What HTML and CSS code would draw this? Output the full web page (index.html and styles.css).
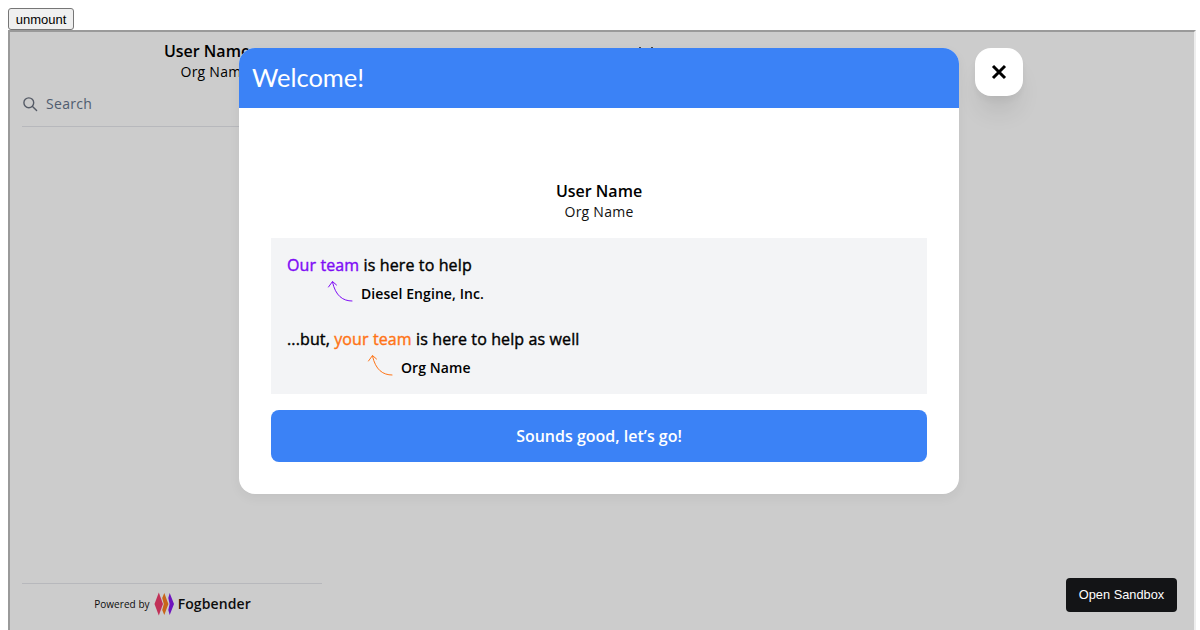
FILE: index.html
```html
<!DOCTYPE html>
<html lang="en">
<head>
<meta charset="utf-8">
<title>Welcome</title>
<link rel="stylesheet" href="styles.css">
</head>
<body>
<button class="unmount" type="button">unmount</button>
<div class="frame">
  <aside class="sidebar">
    <div class="me">
      <div class="me-name">User Name</div>
      <div class="me-org">Org Name</div>
    </div>
    <div class="search">
      <svg class="search-icon" viewBox="0 0 16 16" width="16" height="16" fill="none" stroke="#6b7280" stroke-width="1.4" stroke-linecap="round"><circle cx="6.8" cy="6.8" r="4.9"/><path d="M10.5 10.5 14.6 14.6"/></svg>
      <span class="search-text">Search</span>
    </div>
    <div class="spacer"></div>
    <div class="powered">
      <span class="powered-by">Powered by</span>
      <svg class="logo" viewBox="0 0 20 24" width="20" height="24"><path d="M4.800 0.500 9 12 4.800 23.500 0.500 12Z" fill="#f23d6d"/><path d="M10.300 1 14.400 12 10.300 23 8.200 18 9.800 12 8.200 6Z" fill="#fb8020"/><path d="M15.700 1 20 12 15.700 23 14.300 18 15.600 12 14.300 6Z" fill="#8a18ee"/></svg>
      <span class="brand">Fogbender</span>
    </div>
  </aside>
  <div class="ghost"><i></i><i></i></div>
  <div class="overlay"></div>
  <a class="sandbox">Open Sandbox</a>
  <div class="modal-wrap">
    <section class="modal">
      <header class="modal-head">Welcome!</header>
      <div class="modal-body">
        <div class="modal-user">
          <div class="modal-name">User Name</div>
          <div class="modal-org">Org Name</div>
        </div>
        <div class="info">
          <div class="line">
            <div class="headline"><span class="purple">Our team</span> is here to help</div>
            <div class="team team-a">
              <svg width="26" height="22" viewBox="0 0 26 22" fill="none" stroke="#7e0cf5" stroke-width="1" stroke-linecap="round" stroke-linejoin="round"><path d="M25 21C16 21 8.500 16 5.500 2"/><path d="M1.500 7 5.500 1.500 9.500 5"/></svg>
              <span>Diesel Engine, Inc.</span>
            </div>
          </div>
          <div class="line">
            <div class="headline">...but, <span class="orange">your team</span> is here to help as well</div>
            <div class="team team-b">
              <svg width="26" height="22" viewBox="0 0 26 22" fill="none" stroke="#ff7315" stroke-width="1" stroke-linecap="round" stroke-linejoin="round"><path d="M25 21C16 21 8.500 16 5.500 2"/><path d="M1.500 7 5.500 1.500 9.500 5"/></svg>
              <span>Org Name</span>
            </div>
          </div>
        </div>
        <button class="go" type="button">Sounds good, let’s go!</button>
      </div>
    </section>
    <button class="close" type="button" aria-label="Close">
      <svg viewBox="0 0 16 16" width="16" height="16" fill="none" stroke="#000" stroke-width="3"><path d="M2 2 14 14M14 2 2 14"/></svg>
    </button>
  </div>
</div>
</body>
</html>
```

FILE: styles.css
```css
* { box-sizing: border-box; }
html, body { height: 100%; }
body {
  margin: 0;
  padding: 8px 0 0 8px;
  overflow: hidden;
  background: #fff;
  font-family: "Open Sans", sans-serif;
  color: #000;
}
.unmount {
  display: block;
  width: 66px;
  height: 22px;
  padding: 0;
  border: 1px solid #767676;
  border-radius: 3px;
  background: #efefef;
  font: 13px "Liberation Sans", sans-serif;
  color: #000;
}
.frame {
  position: relative;
  width: 1188px;
  height: 604px;
  border: 2px solid;
  border-color: #9a9a9a #eeeeee #eeeeee #9a9a9a;
  background: #fff;
  overflow: hidden;
}
.sidebar {
  display: flex;
  flex-direction: column;
  width: 324px;
  height: 100%;
  padding: 0 0 0 12px;
}
.me { width: 370px; height: 51px; padding-top: 8px; text-align: center; }
.me-name { font-size: 16px; font-weight: 600; line-height: 22px; color: #000; }
.me-org { padding-left: 16px; font-size: 14px; line-height: 20px; color: #000; letter-spacing: 0.25px; }
.search {
  display: flex;
  align-items: center;
  gap: 8px;
  width: 300px;
  height: 44px;
  padding-bottom: 2px;
  border-bottom: 1px solid #e5e7eb;
}
.search-icon { flex: none; }
.search-text { font-size: 14px; color: #64748b; letter-spacing: 0.3px; }
.spacer { flex: 1; }
.powered {
  display: flex;
  align-items: center;
  justify-content: center;
  gap: 4px;
  width: 300px;
  height: 49px;
  padding-bottom: 9px;
  padding-left: 1px;
  border-top: 1px solid #e5e7eb;
}
.powered-by { font-size: 10px; color: #111; letter-spacing: 0.05px; }
.brand { font-size: 14px; font-weight: 600; color: #111; letter-spacing: 0.1px; }
.ghost {
  position: absolute;
  left: 629px;
  top: 15px;
  display: flex;
  gap: 10px;
}
.ghost i { display: block; width: 2px; height: 1px; background: #555; }
.overlay { position: absolute; inset: 0; background: rgba(0, 0, 0, 0.2); }
.sandbox {
  position: absolute;
  right: 17px;
  bottom: 20px;
  display: flex;
  align-items: center;
  justify-content: center;
  width: 111px;
  height: 34px;
  padding-bottom: 1px;
  border-radius: 4px;
  background: #131416;
  color: #fff;
  font: 12.800px "Liberation Sans", sans-serif;
}
.modal-wrap {
  position: absolute;
  left: 229px;
  top: 16px;
  display: flex;
  align-items: flex-start;
  gap: 16px;
}
.modal {
  width: 720px;
  height: 446px;
  border-radius: 16px;
  background: #fff;
  overflow: hidden;
  box-shadow: 0 4px 12px rgba(0, 0, 0, 0.05);
}
.modal-head {
  height: 60px;
  padding: 0 13px;
  background: #3b82f6;
  color: #fff;
  font: 25.500px/59px Lato, sans-serif;
}
.modal-body { padding: 72px 32px 32px; }
.modal-user { text-align: center; height: 58px; }
.modal-name { font-size: 16px; font-weight: 600; line-height: 22px; }
.modal-org { font-size: 14px; line-height: 20px; color: #111; letter-spacing: 0.25px; }
.info {
  display: flex;
  flex-direction: column;
  gap: 21px;
  height: 156px;
  padding: 16px;
  background: #f3f4f6;
}
.headline { font-size: 16px; font-weight: 400; line-height: 22px; letter-spacing: 0.12px; -webkit-text-stroke: 0.4px; }
.team { display: flex; align-items: flex-start; gap: 8px; height: 28px; margin-top: 3px; font-size: 14px; font-weight: 600; line-height: 20px; letter-spacing: 0.08px; }
.team svg { margin-top: 1px; }
.team span { padding-top: 5px; }
.team-a { padding-left: 40px; }
.team-b { padding-left: 80px; }
.purple { color: #7e0cf5; }
.orange { color: #ff7315; }
.go {
  display: block;
  width: 100%;
  height: 52px;
  margin-top: 16px;
  border: 0;
  border-radius: 8px;
  background: #3b82f6;
  color: #fff;
  font: 600 16px "Open Sans", sans-serif;
}
.close {
  display: flex;
  align-items: center;
  justify-content: center;
  width: 48px;
  height: 48px;
  padding: 0;
  border: 0;
  border-radius: 16px;
  background: #fff;
  box-shadow: 0 20px 25px -5px rgba(0, 0, 0, 0.09), 0 4px 6px rgba(0, 0, 0, 0.04);
}
```
